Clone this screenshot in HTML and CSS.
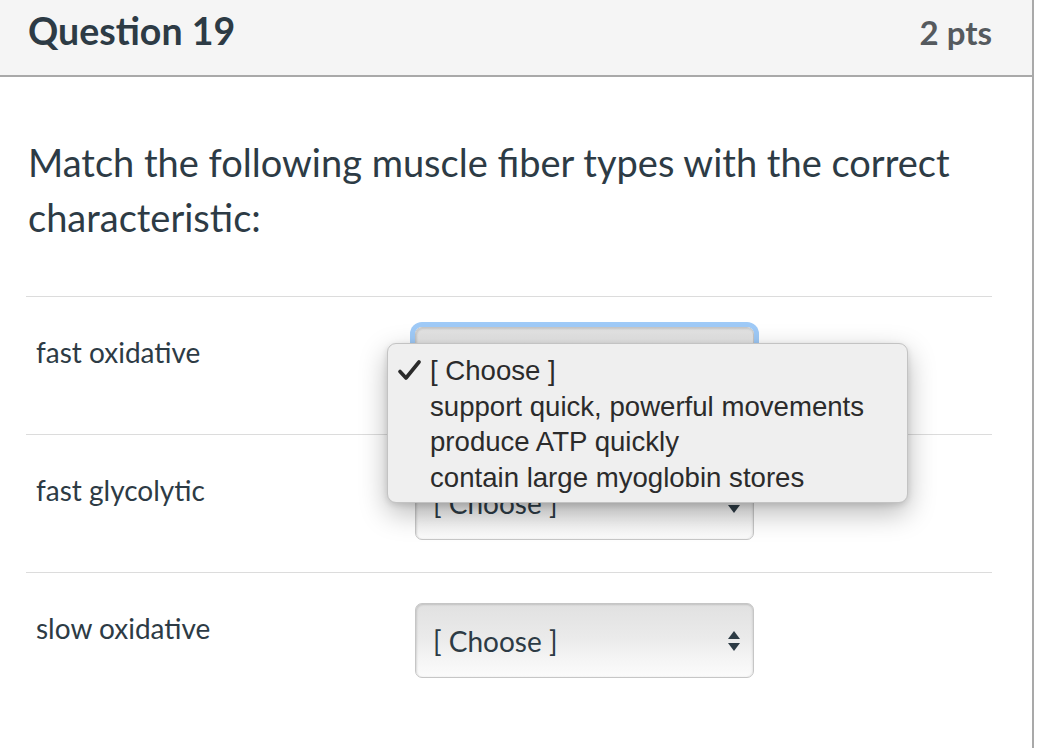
FILE: index.html
```html
<!DOCTYPE html>
<html lang="en">
<head>
<meta charset="utf-8">
<title>Question 19</title>
<link rel="stylesheet" href="styles.css">
</head>
<body>
<div class="question">
  <div class="header">
    <h2 class="title">Question 19</h2>
    <div class="points">2 pts</div>
  </div>
  <p class="text">Match the following muscle fiber types with the correct characteristic:</p>
  <div class="answers">
    <div class="row">
      <div class="label">fast oxidative</div>
      <div class="select-wrap">
        <div class="select focused">
          <span class="value">[ Choose ]</span>
          <svg class="arrows" width="14" height="24" viewBox="0 0 14 24"><path d="M7 2 L13 10 L1 10 Z M7 22 L13 14 L1 14 Z" fill="#2d3b45"/></svg>
        </div>
        <div class="menu">
          <div class="item checked">
            <svg class="check" width="24" height="20" viewBox="0 0 24 20"><path d="M2 11.5 L8 18 L21 2" fill="none" stroke="#2b2b2b" stroke-width="3.6" stroke-linecap="round" stroke-linejoin="round"/></svg>
            [ Choose ]
          </div>
          <div class="item">support quick, powerful movements</div>
          <div class="item">produce ATP quickly</div>
          <div class="item">contain large myoglobin stores</div>
        </div>
      </div>
    </div>
    <div class="row">
      <div class="label">fast glycolytic</div>
      <div class="select-wrap">
        <div class="select">
          <span class="value">[ Choose ]</span>
          <svg class="arrows" width="14" height="24" viewBox="0 0 14 24"><path d="M7 2 L13 10 L1 10 Z M7 22 L13 14 L1 14 Z" fill="#2d3b45"/></svg>
        </div>
      </div>
    </div>
    <div class="row">
      <div class="label">slow oxidative</div>
      <div class="select-wrap">
        <div class="select">
          <span class="value">[ Choose ]</span>
          <svg class="arrows" width="14" height="24" viewBox="0 0 14 24"><path d="M7 2 L13 10 L1 10 Z M7 22 L13 14 L1 14 Z" fill="#2d3b45"/></svg>
        </div>
      </div>
    </div>
  </div>
</div>
</body>
</html>
```
FILE: styles.css
```css
html, body {
  margin: 0;
  padding: 0;
  background: #ffffff;
}
body {
  font-family: Lato, "Open Sans", sans-serif;
  color: #2d3b45;
}
.question {
  width: 1032px;
  height: 748px;
  border-right: 2px solid #a9a9a9;
  box-sizing: content-box;
}
.header {
  box-sizing: border-box;
  height: 77px;
  background: #f5f5f5;
  border-bottom: 2px solid #a9a9a9;
  display: flex;
  align-items: baseline;
  justify-content: space-between;
  padding: 12px 40px 0 28px;
}
.title {
  margin: 0;
  font-size: 37.5px;
  font-weight: 700;
  line-height: 1;
  color: #2d3b45;
}
.points {
  font-size: 33px;
  font-weight: 700;
  line-height: 1;
  color: #555a5e;
}
.text {
  margin: 0;
  padding: 58px 60px 0 28px;
  font-size: 38px;
  line-height: 55px;
  color: #2d3b45;
}
.answers {
  margin: 51px 40px 0 26px;
}
.row {
  display: grid;
  grid-template-columns: 389px 339px;
  border-top: 1px solid #dcdcdc;
  padding: 30px 0 32px;
}
.label {
  padding: 4px 0 0 10px;
  font-size: 28px;
  line-height: 42px;
}
.select-wrap {
  position: relative;
}
.select {
  height: 75px;
  box-sizing: border-box;
  border: 1.5px solid #c6c6c6;
  border-radius: 7px;
  background: linear-gradient(to bottom, #e1e1e1 0%, #eaeaea 45%, #f6f6f6 80%, #fbfbfb 100%);
  box-shadow: inset 1px 1px 2px rgba(0,0,0,0.12), inset -1px 0 2px rgba(0,0,0,0.08);
  display: flex;
  align-items: center;
  justify-content: space-between;
  padding: 0 12px 0 17px;
  font-size: 28px;
  color: #2d3b45;
}
.select.focused {
  box-shadow: 0 0 0 5px #9fcaf7, inset 1px 1px 2px rgba(0,0,0,0.12);
}
.value {
  line-height: 1;
}
.arrows {
  display: block;
}
.menu {
  position: absolute;
  left: -28px;
  top: 16px;
  width: 521px;
  box-sizing: border-box;
  background: #efefef;
  border: 1px solid #c3c3c3;
  border-radius: 9px;
  box-shadow: 0 10px 28px rgba(0,0,0,0.28), 0 2px 6px rgba(0,0,0,0.12);
  padding: 9px 0 7px 42px;
  z-index: 10;
  font-family: "Liberation Sans", Arial, sans-serif;
  font-size: 27.6px;
  line-height: 35.5px;
  color: #2b2b2b;
}
.item {
  position: relative;
  white-space: nowrap;
}
.check {
  position: absolute;
  left: -32px;
  top: 7px;
}
```
